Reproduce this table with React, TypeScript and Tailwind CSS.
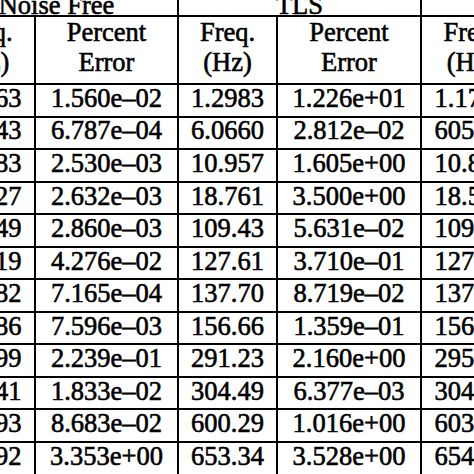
import React from 'react';

const nfFreq = ['1.1763', '6.0643', '10.683', '18.127', '109.49', '127.19', '137.82', '156.86', '290.99', '304.41', '600.93', '653.92'];
const nfErr = ['1.560e–02', '6.787e–04', '2.530e–03', '2.632e–03', '2.860e–03', '4.276e–02', '7.165e–04', '7.596e–03', '2.239e–01', '1.833e–02', '8.683e–02', '3.353e+00'];
const tlsFreq = ['1.2983', '6.0660', '10.957', '18.761', '109.43', '127.61', '137.70', '156.66', '291.23', '304.49', '600.29', '653.34'];
const tlsErr = ['1.226e+01', '2.812e–02', '1.605e+00', '3.500e+00', '5.631e–02', '3.710e–01', '8.719e–02', '1.359e–01', '2.160e+00', '6.377e–03', '1.016e+00', '3.528e+00'];
const nextFreq = ['1.1702', '605.10', '10.881', '18.512', '109.61', '127.38', '137.55', '156.92', '295.07', '304.63', '603.45', '654.18'];
const nextErr = ['1.054e+01', '2.230e–02', '1.844e+00', '2.070e+00', '1.103e–01', '1.482e–01', '2.340e–02', '4.620e–02', '1.375e+00', '7.217e–02', '4.191e–01', '4.040e–01'];

// column widths incl. the 2px right rule
const W = ['w-[100px]', 'w-[143px]', 'w-[99px]', 'w-[144px]', 'w-[100px]', 'w-[150px]'];

function Cell({ w, children }: { w: string; children: React.ReactNode }) {
  return (
    <div className={`${w} h-full shrink-0 border-r-2 border-black flex items-center justify-center pb-[3px]`}>
      {children}
    </div>
  );
}

export default function App() {
  return (
    <div className="w-[474px] h-[474px] overflow-hidden bg-white text-black text-[26.5px] font-['Liberation_Serif','DejaVu_Serif',serif] [-webkit-text-stroke:0.6px_black]">
      <div className="ml-[-64px] mt-[-16px] w-[736px]">
        {/* group header */}
        <div className="flex h-[33px] border-b-2 border-black leading-[26px]">
          <div className="w-[243px] shrink-0 border-r-2 border-black flex justify-center pt-[8px]">Noise Free</div>
          <div className="w-[243px] shrink-0 border-r-2 border-black flex justify-center pt-[8px]">TLS</div>
          <div className="w-[250px] shrink-0 border-r-2 border-black flex justify-center pt-[8px]">TLS-CF</div>
        </div>

        {/* column header */}
        <div className="flex h-[68px] border-b-2 border-black leading-[30px]">
          {['Freq.|(Hz)', 'Percent|Error', 'Freq.|(Hz)', 'Percent|Error', 'Freq.|(Hz)', 'Percent|Error'].map((h, i) => (
            <div key={i} className={`${W[i]} h-full shrink-0 border-r-2 border-black flex flex-col items-center`}>
              {h.split('|').map((t) => (
                <span key={t}>{t}</span>
              ))}
            </div>
          ))}
        </div>

        {nfFreq.map((_, r) => (
          <div key={r} className="flex h-[32.55px] border-b-2 border-black">
            <Cell w={W[0]}>{nfFreq[r]}</Cell>
            <Cell w={W[1]}>{nfErr[r]}</Cell>
            <Cell w={W[2]}>{tlsFreq[r]}</Cell>
            <Cell w={W[3]}>{tlsErr[r]}</Cell>
            <Cell w={W[4]}>{nextFreq[r]}</Cell>
            <Cell w={W[5]}>{nextErr[r]}</Cell>
          </div>
        ))}
      </div>
    </div>
  );
}
